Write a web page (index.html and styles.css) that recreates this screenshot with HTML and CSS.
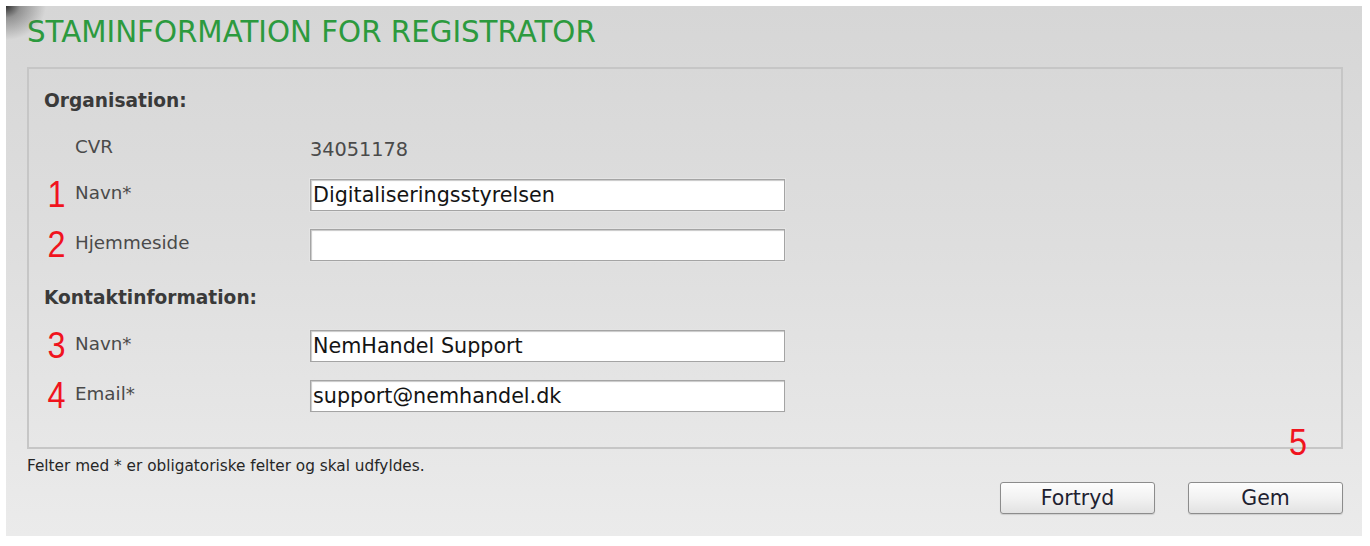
FILE: index.html
```html
<!DOCTYPE html>
<html lang="da">
<head>
<meta charset="utf-8">
<title>Staminformation for registrator</title>
<link rel="stylesheet" href="styles.css">
</head>
<body>
<div class="panel">
  <h1 class="title">STAMINFORMATION FOR REGISTRATOR</h1>
  <div class="box">
    <div class="heading">Organisation:</div>
    <div class="row row-cvr">
      <span class="num"></span>
      <span class="label">CVR</span>
      <span class="value">34051178</span>
    </div>
    <div class="row row-a">
      <span class="num">1</span>
      <span class="label">Navn*</span>
      <span class="field">Digitaliseringsstyrelsen</span>
    </div>
    <div class="row row-b">
      <span class="num">2</span>
      <span class="label">Hjemmeside</span>
      <span class="field"></span>
    </div>
    <div class="heading h-kontakt">Kontaktinformation:</div>
    <div class="row row-c">
      <span class="num">3</span>
      <span class="label">Navn*</span>
      <span class="field">NemHandel Support</span>
    </div>
    <div class="row row-b">
      <span class="num">4</span>
      <span class="label">Email*</span>
      <span class="field">support@nemhandel.dk</span>
    </div>
  </div>
  <p class="note">Felter med * er obligatoriske felter og skal udfyldes.</p>
  <div class="buttons">
    <button class="btn">Fortryd</button>
    <button class="btn">Gem</button>
  </div>
  <span class="num num5">5</span>
</div>
</body>
</html>
```
FILE: styles.css
```css
html, body {
  margin: 0;
  padding: 0;
  background: #ffffff;
}
body {
  font-family: "DejaVu Sans", Verdana, sans-serif;
}
.panel {
  position: relative;
  margin: 6px 0 0 6px;
  width: 1356px;
  height: 530px;
  box-sizing: border-box;
  padding: 0 19px 0 21px;
  background: linear-gradient(to bottom, #d6d6d6 0%, #dedede 45%, #ebebeb 100%);
}
.panel::before {
  content: "";
  position: absolute;
  left: 0;
  top: 0;
  width: 40px;
  height: 34px;
  background: radial-gradient(ellipse 40px 34px at 0 0, rgba(30,30,30,0.9) 0%, rgba(80,80,80,0.5) 35%, rgba(214,214,214,0) 100%);
}
.title {
  margin: 0;
  padding-top: 10px;
  height: 61px;
  box-sizing: border-box;
  font-weight: normal;
  font-size: 29.3px;
  line-height: 32px;
  color: #2c9a3e;
}
.box {
  height: 382px;
  box-sizing: border-box;
  border: 2px solid #c6c6c6;
  padding: 20px 0 0 15px;
  display: flex;
  flex-direction: column;
}
.heading {
  font-weight: bold;
  font-size: 18.6px;
  line-height: 24px;
  height: 24px;
  color: #3a3a3a;
}
.h-kontakt { margin-top: 25px; }
.row {
  display: grid;
  grid-template-columns: 31px 235px 475px;
  align-items: center;
  height: 32px;
}
.row-cvr { margin-top: 20px; }
.row-a { margin-top: 14px; }
.row-b { margin-top: 18px; }
.row-c { margin-top: 20px; }
.num {
  font-family: "Liberation Sans", Arial, sans-serif;
  color: #f0141e;
  font-size: 36px;
  line-height: 32px;
  display: inline-block;
  transform: scaleX(0.9);
  transform-origin: left center;
  padding-left: 4px;
}
.label {
  font-size: 18.3px;
  color: #4a4a4a;
  margin-top: -6px;
}
.value {
  font-size: 19.3px;
  color: #4a4a4a;
}
.field {
  display: block;
  height: 32px;
  box-sizing: border-box;
  background: #ffffff;
  border: 1px solid #a4a4a4;
  box-shadow: inset 1px 1px 1px #c8c8c8, 0 0 0 1px #e4e4e4;
  padding: 0 2px;
  font-size: 20.7px;
  line-height: 30px;
  color: #141414;
  white-space: nowrap;
}
.note {
  margin: 8px 0 0 0;
  font-size: 15.3px;
  line-height: 18px;
  color: #262626;
}
.buttons {
  display: flex;
  justify-content: flex-end;
  gap: 33px;
  margin-top: 7px;
}
.btn {
  width: 155px;
  height: 32px;
  border: 1px solid #8c8c8c;
  border-radius: 3px;
  background: linear-gradient(to bottom, #fdfdfd 0%, #f2f2f2 50%, #e2e2e2 100%);
  font-family: "DejaVu Sans", Verdana, sans-serif;
  font-size: 20.5px;
  color: #1e2130;
  padding: 0;
  box-shadow: 0 1px 1px rgba(0,0,0,0.12);
}
.num5 {
  position: absolute;
  left: 1283px;
  top: 421px;
  padding-left: 0;
}
```
